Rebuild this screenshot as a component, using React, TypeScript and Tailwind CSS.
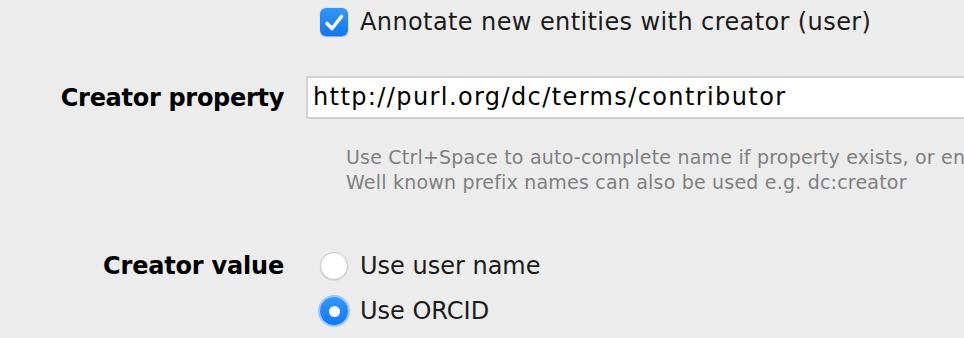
import React from 'react';

const font = { fontFamily: '"Lucida Grande", "DejaVu Sans", sans-serif' };

function CheckBox() {
  return (
    <span className="flex h-[28px] w-[28px] items-center justify-center rounded-[6px] bg-gradient-to-b from-[#3596ff] to-[#0b76fb] shadow-[0_0.5px_1px_rgba(0,0,0,0.3)]">
      <svg viewBox="0 0 28 28" className="h-[28px] w-[28px]" fill="none" stroke="white" strokeWidth="3.6" strokeLinecap="round" strokeLinejoin="round">
        <path d="M7 15.5 L12 20.5 L21.5 8.5" />
      </svg>
    </span>
  );
}

function Radio({ checked }: { checked?: boolean }) {
  if (checked) {
    return (
      <span className="flex h-[28px] w-[28px] items-center justify-center rounded-full bg-gradient-to-b from-[#3596ff] to-[#0b76fb] ring-2 ring-[#9cc8f8]">
        <span className="h-[11px] w-[11px] rounded-full bg-white" />
      </span>
    );
  }
  return <span className="h-[28px] w-[28px] rounded-full border border-[#c9c9c9] bg-white shadow-[0_0.5px_1px_rgba(0,0,0,0.15)]" />;
}

export default function App() {
  return (
    <div className="h-[338px] w-[964px] overflow-hidden bg-[#ececec] text-[#1b1b1b]" style={font}>
      <div className="grid grid-cols-[284px_1fr] gap-x-[22px]">
        <div />
        <label className="flex h-[44px] items-center gap-[12px] pl-[14px] text-[24px] tracking-[0.4px]">
          <CheckBox />
          <span>Annotate new entities with creator (user)</span>
        </label>

        <div className="mt-[32px] flex h-[43px] items-center justify-end text-[24px] font-bold tracking-[-0.3px] text-black">Creator property</div>
        <div className="mt-[32px] h-[43px] w-[700px] whitespace-nowrap border-2 border-[#d2d2d2] bg-white pl-[5px] text-[24px] leading-[39px] tracking-[1.4px] text-black">
          http://purl.org/dc/terms/contributor
        </div>

        <div />
        <div className="mt-[26px] whitespace-nowrap pl-[40px] text-[19px] leading-[24.5px] tracking-[0.2px] text-[#7f7f7f]">
          <div>Use Ctrl+Space to auto-complete name if property exists, or enter a full URI</div>
          <div>Well known prefix names can also be used e.g. dc:creator</div>
        </div>

        <div className="mt-[50px] flex h-[44px] items-center justify-end text-[24px] font-bold tracking-[-0.2px] text-black">Creator value</div>
        <div className="mt-[50px] flex flex-col gap-[1px] pl-[14px] text-[24px]">
          <label className="flex h-[44px] items-center gap-[12px]">
            <Radio />
            <span>Use user name</span>
          </label>
          <label className="flex h-[44px] items-center gap-[12px]">
            <Radio checked />
            <span>Use ORCID</span>
          </label>
        </div>
      </div>
    </div>
  );
}
